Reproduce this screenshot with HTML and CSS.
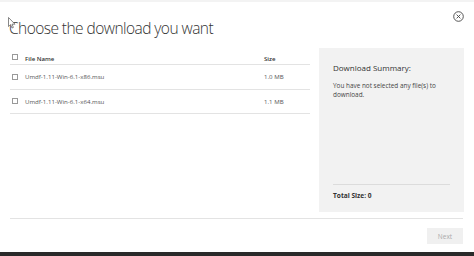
FILE: index.html
```html
<!DOCTYPE html>
<html>
<head>
<meta charset="utf-8">
<link rel="stylesheet" href="styles.css">
</head>
<body>
<div class="page">
  <div class="topbar">
    <button class="close" aria-label="Close">
      <svg width="11" height="11" viewBox="0 0 11 11"><circle cx="5.5" cy="5.5" r="4.8" fill="none" stroke="#444" stroke-width="0.9"/><path d="M3.6 3.6 L7.4 7.4 M7.4 3.6 L3.6 7.4" stroke="#444" stroke-width="0.9"/></svg>
    </button>
  </div>
  <h1 class="title">Choose the download you want</h1>
  <div class="main">
    <div class="table">
      <div class="row head">
        <span class="cb"></span><span class="name">File Name</span><span class="size">Size</span>
      </div>
      <div class="row">
        <span class="cb"></span><span class="name">Umdf-1.11-Win-6.1-x86.msu</span><span class="size">1.0 MB</span>
      </div>
      <div class="row">
        <span class="cb"></span><span class="name">Umdf-1.11-Win-6.1-x64.msu</span><span class="size">1.1 MB</span>
      </div>
    </div>
    <aside class="summary">
      <div class="sum-title">Download Summary:</div>
      <div class="sum-text">You have not selected any file(s) to download.</div>
      <div class="sum-total">Total Size: 0</div>
    </aside>
  </div>
  <div class="footer">
    <button class="next">Next</button>
  </div>
  <div class="taskbar"></div>
</div>
<svg class="cursor" width="8" height="12" viewBox="0 0 8 12"><path d="M0.5 0.5 L0.5 9.5 L2.6 7.6 L4 11 L5.4 10.4 L4 7.2 L7 7.2 Z" fill="#fff" stroke="#555" stroke-width="0.7"/></svg>
</body>
</html>
```
FILE: styles.css
```css
* { box-sizing: border-box; }
html, body { margin: 0; padding: 0; background: #fff; }
body {
  width: 474px; height: 256px; overflow: hidden; position: relative;
  font-family: "Open Sans", "Noto Sans", sans-serif; color: #333;
}
.page { height: 256px; display: flex; flex-direction: column; border-top: 2px solid #f3f3f3; }
.topbar { height: 8px; display: flex; justify-content: flex-end; padding-right: 10px; }
.close { margin-top: 9px; width: 11px; height: 11px; padding: 0; border: 0; background: none; display: flex; }
.title {
  margin: 6px 0 0 9px; font-family: "Open Sans", sans-serif; font-weight: 300; font-size: 15.5px; letter-spacing: -0.55px; line-height: 24px; color: #333;
}
.main { display: flex; gap: 9px; padding-left: 10px; margin-top: 10px; }
.table { width: 300px; display: flex; flex-direction: column; }
.row {
  display: flex; align-items: center; height: 24.5px; border-bottom: 1px solid #e3e3e3;
  font-size: 6.1px; color: #555; padding-left: 2px;
}
.row.head { height: 15px; font-weight: 600; color: #333; align-items: flex-start; padding-top: 4px; }
.cb { width: 6px; height: 6px; border: 1px solid #999; margin-right: 7px; flex: none; }
.name { flex: 1; }
.size { width: 46px; }
.summary {
  width: 145px; height: 164px; margin-top: -2px; background: #f2f2f2; padding: 14px 14px 0 14px;
  display: flex; flex-direction: column;
}
.sum-title { font-size: 8px; color: #333; line-height: 12px; }
.sum-text { font-size: 6.4px; color: #444; line-height: 9px; margin-top: 7px; padding-right: 12px; }
.sum-total {
  margin-top: auto; margin-bottom: 12px; border-top: 1px solid #dcdcdc;
  padding-top: 6px; font-size: 6.6px; font-weight: 700; color: #333; width: 117px;
}
.footer {
  margin: 6px 11px 0 10px; border-top: 1px solid #e3e3e3; display: flex; justify-content: flex-end; padding-top: 9px;
}
.next {
  width: 36px; height: 16px; background: #f0f0f0; border: 0; color: #aaa; font-family: inherit; font-size: 6.5px; padding: 0;
}
.taskbar { margin-top: auto; height: 4px; background: #2a2a2a; }
.cursor { position: absolute; left: 8px; top: 17px; }
```
